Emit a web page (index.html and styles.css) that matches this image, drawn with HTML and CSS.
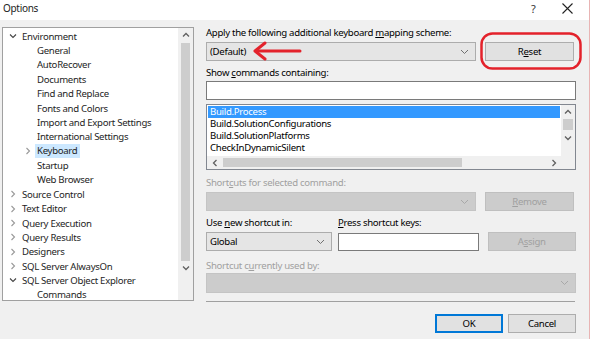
FILE: index.html
```html
<!DOCTYPE html>
<html>
<head>
<meta charset="utf-8">
<link rel="stylesheet" href="styles.css">
</head>
<body>
<div class="window">
  <div class="titlebar">
    <span class="title">Options</span>
    <span class="help">?</span>
    <span class="close">
      <svg width="11" height="11" viewBox="0 0 11 11"><path d="M0.5 0.5 L10.5 10.5 M10.5 0.5 L0.5 10.5" stroke="#222" stroke-width="1.1" fill="none"/></svg>
    </span>
  </div>
  <div class="body">
    <div class="tree">
      <div class="tree-items">
        <div class="row"><span class="chev exp"><svg width="8" height="8" viewBox="0 0 8 8"><path d="M1 2.5 L4 5.5 L7 2.5" stroke="#444" fill="none" stroke-width="1.1"/></svg></span>Environment</div>
        <div class="row child">General</div>
        <div class="row child">AutoRecover</div>
        <div class="row child">Documents</div>
        <div class="row child">Find and Replace</div>
        <div class="row child">Fonts and Colors</div>
        <div class="row child">Import and Export Settings</div>
        <div class="row child">International Settings</div>
        <div class="row child sub"><span class="chev col"><svg width="8" height="8" viewBox="0 0 8 8"><path d="M2.5 1 L5.5 4 L2.5 7" stroke="#999" fill="none" stroke-width="1.1"/></svg></span><span class="sel">Keyboard</span></div>
        <div class="row child">Startup</div>
        <div class="row child">Web Browser</div>
        <div class="row"><span class="chev col"><svg width="8" height="8" viewBox="0 0 8 8"><path d="M2.5 1 L5.5 4 L2.5 7" stroke="#999" fill="none" stroke-width="1.1"/></svg></span>Source Control</div>
        <div class="row"><span class="chev col"><svg width="8" height="8" viewBox="0 0 8 8"><path d="M2.5 1 L5.5 4 L2.5 7" stroke="#999" fill="none" stroke-width="1.1"/></svg></span>Text Editor</div>
        <div class="row"><span class="chev col"><svg width="8" height="8" viewBox="0 0 8 8"><path d="M2.5 1 L5.5 4 L2.5 7" stroke="#999" fill="none" stroke-width="1.1"/></svg></span>Query Execution</div>
        <div class="row"><span class="chev col"><svg width="8" height="8" viewBox="0 0 8 8"><path d="M2.5 1 L5.5 4 L2.5 7" stroke="#999" fill="none" stroke-width="1.1"/></svg></span>Query Results</div>
        <div class="row"><span class="chev col"><svg width="8" height="8" viewBox="0 0 8 8"><path d="M2.5 1 L5.5 4 L2.5 7" stroke="#999" fill="none" stroke-width="1.1"/></svg></span>Designers</div>
        <div class="row"><span class="chev col"><svg width="8" height="8" viewBox="0 0 8 8"><path d="M2.5 1 L5.5 4 L2.5 7" stroke="#999" fill="none" stroke-width="1.1"/></svg></span>SQL Server AlwaysOn</div>
        <div class="row"><span class="chev exp"><svg width="8" height="8" viewBox="0 0 8 8"><path d="M1 2.5 L4 5.5 L7 2.5" stroke="#444" fill="none" stroke-width="1.1"/></svg></span>SQL Server Object Explorer</div>
        <div class="row child">Commands</div>
      </div>
      <div class="vscroll">
        <div class="arrow"><svg width="8" height="6" viewBox="0 0 8 6"><path d="M1 4.5 L4 1.5 L7 4.5" stroke="#606060" fill="none" stroke-width="1.3"/></svg></div>
        <div class="thumb tree-thumb"></div>
        <div class="arrow"><svg width="8" height="6" viewBox="0 0 8 6"><path d="M1 1.5 L4 4.5 L7 1.5" stroke="#606060" fill="none" stroke-width="1.3"/></svg></div>
      </div>
    </div>

    <div class="panel">
      <div class="label l-scheme">Apply the following additional keyboard <u>m</u>apping scheme:</div>
      <div class="line r-scheme">
        <div class="combo scheme"><span>(Default)</span><svg width="9" height="6" viewBox="0 0 9 6"><path d="M1 1 L4.5 4.5 L8 1" stroke="#707070" fill="none" stroke-width="1"/></svg></div>
        <div class="btn">R<u>e</u>set</div>
      </div>
      <div class="label l-show">Show <u>c</u>ommands containing:</div>
      <div class="textbox full"></div>
      <div class="listbox">
        <div class="list-main">
          <div class="items">
            <div class="item selected">Build.Process</div>
            <div class="item">Build.SolutionConfigurations</div>
            <div class="item">Build.SolutionPlatforms</div>
            <div class="item">CheckInDynamicSilent</div>
          </div>
          <div class="lvscroll">
            <div class="arrow"><svg width="8" height="6" viewBox="0 0 8 6"><path d="M1 4.5 L4 1.5 L7 4.5" stroke="#606060" fill="none" stroke-width="1.3"/></svg></div>
            <div class="thumb list-thumb"></div>
            <div class="arrow"><svg width="8" height="6" viewBox="0 0 8 6"><path d="M1 1.5 L4 4.5 L7 1.5" stroke="#606060" fill="none" stroke-width="1.3"/></svg></div>
          </div>
        </div>
        <div class="hscroll">
          <div class="harrow"><svg width="6" height="8" viewBox="0 0 6 8"><path d="M4.5 1 L1.5 4 L4.5 7" stroke="#606060" fill="none" stroke-width="1.3"/></svg></div>
          <div class="hthumb"></div>
          <div class="hspace"></div>
          <div class="harrow"><svg width="6" height="8" viewBox="0 0 6 8"><path d="M1.5 1 L4.5 4 L1.5 7" stroke="#606060" fill="none" stroke-width="1.3"/></svg></div>
          <div class="corner"></div>
        </div>
      </div>
      <div class="label disabled l-shortcuts">Short<u>c</u>uts for selected command:</div>
      <div class="line r-shortcuts">
        <div class="combo scheme off"><span></span><svg width="9" height="6" viewBox="0 0 9 6"><path d="M1 1 L4.5 4.5 L8 1" stroke="#a8a8a8" fill="none" stroke-width="1"/></svg></div>
        <div class="btn off"><u>R</u>emove</div>
      </div>
      <div class="line labels">
        <div class="label scope-label">Use <u>n</u>ew shortcut in:</div>
        <div class="label"><u>P</u>ress shortcut keys:</div>
      </div>
      <div class="line r-new">
        <div class="combo global"><span>Global</span><svg width="9" height="6" viewBox="0 0 9 6"><path d="M1 1 L4.5 4.5 L8 1" stroke="#707070" fill="none" stroke-width="1"/></svg></div>
        <div class="textbox keys"></div>
        <div class="btn off">A<u>s</u>sign</div>
      </div>
      <div class="label disabled l-used">Shortcut c<u>u</u>rrently used by:</div>
      <div class="combo full off"><span></span><svg width="9" height="6" viewBox="0 0 9 6"><path d="M1 1 L4.5 4.5 L8 1" stroke="#a8a8a8" fill="none" stroke-width="1"/></svg></div>
      <div class="separator"></div>
      <div class="footer">
        <div class="btn ok">OK</div>
        <div class="btn">Cancel</div>
      </div>
    </div>
  </div>

  <svg class="annot" width="590" height="339" viewBox="0 0 590 339">
    <path d="M256 51 L300 51" stroke="#e3222b" stroke-width="3" fill="none" stroke-linecap="round"/>
    <path d="M265 43 L255 51 L265 59" stroke="#e3222b" stroke-width="3" fill="none" stroke-linecap="round" stroke-linejoin="round"/>
    <rect x="481.5" y="33.5" width="99" height="35" rx="11" ry="11" stroke="#e3222b" stroke-width="2.5" fill="none"/>
  </svg>
</div>
</body>
</html>
```

FILE: styles.css
```css
* { box-sizing: border-box; }
html, body { margin: 0; padding: 0; }
body {
  width: 590px;
  height: 339px;
  overflow: hidden;
  background: #f0f0f0;
  font-family: "Noto Sans", "Open Sans", sans-serif;
  font-size: 9.6px;
  letter-spacing: -0.3px;
  color: #000;
}
u { text-decoration: underline; text-underline-offset: 1px; }
.window {
  position: relative;
  width: 590px;
  height: 339px;
  border-right: 1px solid #e8b4b4;
}
.titlebar {
  height: 20px;
  background: #fff;
  display: flex;
  align-items: center;
  padding-left: 3px;
  font-size: 10px;
  color: #222;
}
.title { flex: 1; margin-top: -4px; }
.help { width: 10px; margin-right: 21px; margin-top: -4px; font-size: 11px; color: #333; }
.close { width: 11px; margin-right: 16px; margin-top: -4px; display: flex; }

.body {
  display: flex;
  align-items: flex-start;
}
.tree {
  margin-top: 7px;
  margin-left: 2px;
  width: 192px;
  height: 274px;
  border: 1px solid #a0a0a0;
  background: #fff;
  display: flex;
  overflow: hidden;
}
.tree-items {
  flex: 1;
  padding-top: 1px;
}
.row {
  height: 14.38px;
  line-height: 13px;
  display: flex;
  align-items: center;
  padding-left: 19px;
  position: relative;
  white-space: nowrap;
  color: #1e1e1e;
}
.row.child { padding-left: 34px; }
.chev {
  position: absolute;
  left: 6px;
  top: 3px;
  width: 8px;
  height: 8px;
  display: flex;
}
.row.sub .chev { left: 21px; }
.sel {
  background: #cce8ff;
  margin-left: -2px;
  padding: 0 3px 0 2px;
  line-height: 14px;
}
.vscroll {
  width: 15px;
  background: #f0f0f0;
  display: flex;
  flex-direction: column;
  align-items: center;
}
.arrow {
  height: 14px;
  width: 100%;
  display: flex;
  align-items: center;
  justify-content: center;
}
.thumb {
  width: 9px;
  background: #cdcdcd;
}
.tree-thumb { height: 218px; margin-top: 1px; }

.panel {
  margin-left: 12px;
  width: 370px;
  display: flex;
  flex-direction: column;
  padding-top: 6px;
}
.label {
  height: 14px;
  line-height: 14px;
  white-space: nowrap;
  color: #000;
}
.label.disabled { color: #a0a0a0; }
.line {
  display: flex;
  gap: 9px;
  align-items: center;
}
.combo {
  height: 19px;
  background: #e5e5e5;
  border: 1px solid #acacac;
  display: flex;
  align-items: center;
  justify-content: space-between;
  padding: 0 6px 0 3px;
}
.combo.off { background: #cccccc; border-color: #c4c4c4; }
.scheme { width: 270px; }
.btn {
  height: 19px;
  width: 89px;
  background: #e1e1e1;
  border: 1px solid #adadad;
  display: flex;
  align-items: center;
  justify-content: center;
}
.btn.off { background: #cccccc; border-color: #bfbfbf; color: #a0a0a0; }

.r-scheme { margin-top: 2px; }
.l-show { margin-top: 5px; }
.textbox {
  background: #fff;
  border: 1px solid #7a7a7a;
  height: 19px;
}
.textbox.full { width: 370px; margin-top: 1px; }
.listbox {
  margin-top: 4px;
  width: 370px;
  height: 66px;
  border: 1px solid #828790;
  background: #fff;
  display: flex;
  flex-direction: column;
}
.list-main { display: flex; flex: 1; }
.items { flex: 1; padding: 1px 1px 0 1px; }
.item {
  height: 12px;
  line-height: 12px;
  padding-left: 2px;
  white-space: nowrap;
}
.item.selected { background: #3399ff; color: #fff; }
.lvscroll {
  width: 14px;
  background: #f0f0f0;
  display: flex;
  flex-direction: column;
  align-items: center;
}
.lvscroll .arrow { height: 13px; }
.list-thumb { height: 11px; margin: 1px 0; width: 10px; }
.hscroll {
  height: 13px;
  background: #f0f0f0;
  display: flex;
  align-items: center;
}
.harrow { width: 15px; height: 13px; display: flex; align-items: center; justify-content: center; }
.hthumb { width: 239px; height: 9px; background: #cdcdcd; margin-left: 1px; }
.hspace { flex: 1; }
.corner { width: 14px; height: 13px; background: #f0f0f0; }

.l-shortcuts { margin-top: 6px; }
.r-shortcuts { margin-top: 2px; }
.labels { margin-top: 5px; gap: 0; }
.scope-label { width: 132px; }
.r-new { margin-top: 2px; }
.global { width: 127px; padding-left: 3px; }
.keys { width: 141px; margin-left: -3px; height: 18px; }
.l-used { margin-top: 8px; }
.combo.full { width: 370px; height: 20px; }
.separator {
  height: 1px;
  background: #a0a0a0;
  margin-top: 8px;
  width: 369px;
}
.footer {
  display: flex;
  justify-content: flex-end;
  gap: 5px;
  margin-top: 12px;
}
.footer .btn { width: 68px; height: 19px; }
.btn.ok { border: 1px solid #0078d7; box-shadow: inset 0 0 0 1px #0078d7; }

.annot {
  position: absolute;
  left: 0;
  top: 0;
  pointer-events: none;
}
```
